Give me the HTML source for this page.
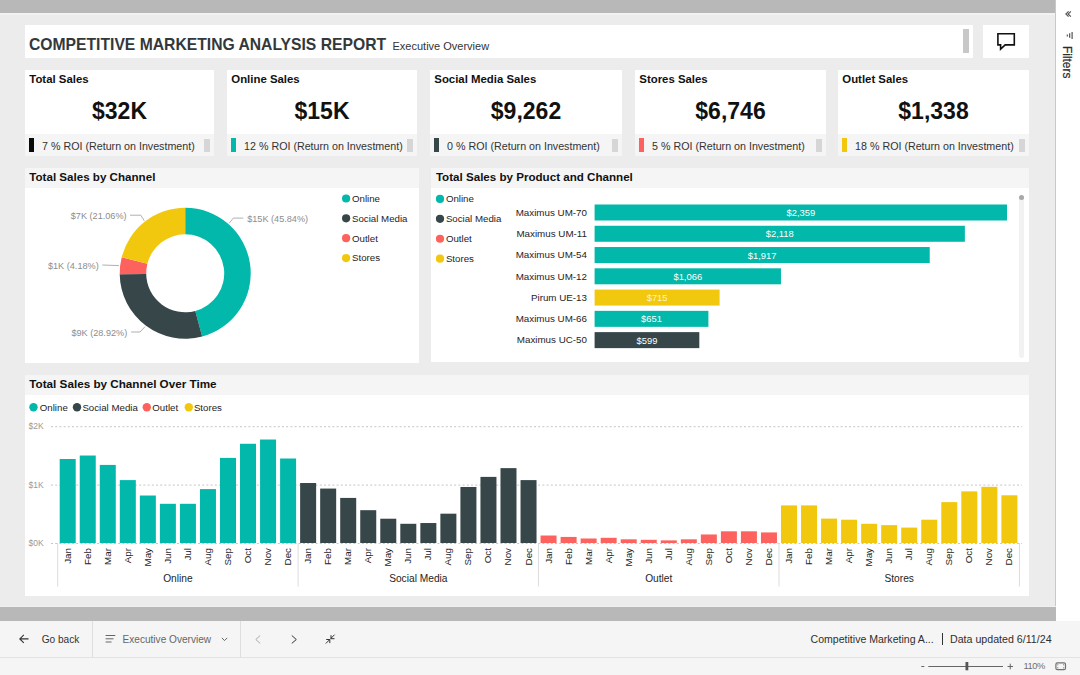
<!DOCTYPE html>
<html><head><meta charset="utf-8">
<style>
*{margin:0;padding:0;box-sizing:border-box}
html,body{width:1080px;height:675px;overflow:hidden;background:#ececec;font-family:"Liberation Sans",sans-serif;color:#252423;position:relative}
.a{position:absolute}
.t{position:absolute;white-space:nowrap;line-height:1;z-index:2}
svg{position:absolute;left:0;top:0;z-index:1}
</style></head><body>
<div class="a" style="left:0px;top:0px;width:1056px;height:13px;background:#b8b8b8;"></div>
<div class="a" style="left:0px;top:13px;width:1056px;height:2px;background:#f2f2f2;"></div>
<div class="a" style="left:1055px;top:0px;width:25px;height:621px;background:#fff;border-left:1px solid #c8c8c8;"></div>
<div class="a" style="left:25px;top:25px;width:948px;height:33px;background:#fff;"></div>
<div class="t" style="left:29.00px;top:36.71px;font-size:15.7px;color:#33383b;font-weight:700;">COMPETITIVE MARKETING ANALYSIS REPORT</div>
<div class="t" style="left:392.50px;top:40.69px;font-size:11px;color:#333;">Executive Overview</div>
<div class="a" style="left:963px;top:29px;width:6px;height:24px;background:#c8c8c8;"></div>
<div class="a" style="left:983px;top:25px;width:46px;height:33px;background:#fff;"></div>
<div class="a" style="left:25px;top:70px;width:189px;height:64px;background:#fff;"></div>
<div class="a" style="left:25px;top:134px;width:189px;height:22px;background:#f5f5f5;"></div>
<div class="t" style="left:29.30px;top:73.85px;font-size:11.4px;color:#111;font-weight:700;">Total Sales</div>
<div class="t" style="left:119.50px;transform:translateX(-50%);top:99.53px;font-size:23px;color:#111;font-weight:700;">$32K</div>
<div class="a" style="left:28.9px;top:138px;width:5.3px;height:14.2px;background:#0a0a0a;"></div>
<div class="t" style="left:42.10px;top:140.94px;font-size:10.7px;color:#333;">7 % ROI (Return on Investment)</div>
<div class="a" style="left:203.7px;top:138.5px;width:6.2px;height:13.6px;background:#d6d6d6;"></div>
<div class="a" style="left:227px;top:70px;width:190px;height:64px;background:#fff;"></div>
<div class="a" style="left:227px;top:134px;width:190px;height:22px;background:#f5f5f5;"></div>
<div class="t" style="left:231.30px;top:73.85px;font-size:11.4px;color:#111;font-weight:700;">Online Sales</div>
<div class="t" style="left:322.00px;transform:translateX(-50%);top:99.53px;font-size:23px;color:#111;font-weight:700;">$15K</div>
<div class="a" style="left:230.9px;top:138px;width:5.3px;height:14.2px;background:#01b8aa;"></div>
<div class="t" style="left:244.10px;top:140.94px;font-size:10.7px;color:#333;">12 % ROI (Return on Investment)</div>
<div class="a" style="left:406.7px;top:138.5px;width:6.2px;height:13.6px;background:#d6d6d6;"></div>
<div class="a" style="left:430px;top:70px;width:192px;height:64px;background:#fff;"></div>
<div class="a" style="left:430px;top:134px;width:192px;height:22px;background:#f5f5f5;"></div>
<div class="t" style="left:434.30px;top:73.85px;font-size:11.4px;color:#111;font-weight:700;">Social Media Sales</div>
<div class="t" style="left:526.00px;transform:translateX(-50%);top:99.53px;font-size:23px;color:#111;font-weight:700;">$9,262</div>
<div class="a" style="left:433.9px;top:138px;width:5.3px;height:14.2px;background:#374649;"></div>
<div class="t" style="left:447.10px;top:140.94px;font-size:10.7px;color:#333;">0 % ROI (Return on Investment)</div>
<div class="a" style="left:611.7px;top:138.5px;width:6.2px;height:13.6px;background:#d6d6d6;"></div>
<div class="a" style="left:635px;top:70px;width:191px;height:64px;background:#fff;"></div>
<div class="a" style="left:635px;top:134px;width:191px;height:22px;background:#f5f5f5;"></div>
<div class="t" style="left:639.30px;top:73.85px;font-size:11.4px;color:#111;font-weight:700;">Stores Sales</div>
<div class="t" style="left:730.50px;transform:translateX(-50%);top:99.53px;font-size:23px;color:#111;font-weight:700;">$6,746</div>
<div class="a" style="left:638.9px;top:138px;width:5.3px;height:14.2px;background:#fd625e;"></div>
<div class="t" style="left:652.10px;top:140.94px;font-size:10.7px;color:#333;">5 % ROI (Return on Investment)</div>
<div class="a" style="left:815.7px;top:138.5px;width:6.2px;height:13.6px;background:#d6d6d6;"></div>
<div class="a" style="left:838px;top:70px;width:191px;height:64px;background:#fff;"></div>
<div class="a" style="left:838px;top:134px;width:191px;height:22px;background:#f5f5f5;"></div>
<div class="t" style="left:842.30px;top:73.85px;font-size:11.4px;color:#111;font-weight:700;">Outlet Sales</div>
<div class="t" style="left:933.50px;transform:translateX(-50%);top:99.53px;font-size:23px;color:#111;font-weight:700;">$1,338</div>
<div class="a" style="left:841.9px;top:138px;width:5.3px;height:14.2px;background:#f2c80f;"></div>
<div class="t" style="left:855.10px;top:140.94px;font-size:10.7px;color:#333;">18 % ROI (Return on Investment)</div>
<div class="a" style="left:1018.7px;top:138.5px;width:6.2px;height:13.6px;background:#d6d6d6;"></div>
<div class="a" style="left:25px;top:168px;width:394px;height:195px;background:#fff;"></div>
<div class="a" style="left:25px;top:168px;width:394px;height:20px;background:#f5f5f5;"></div>
<div class="t" style="left:29.30px;top:170.68px;font-size:11.6px;color:#111;font-weight:700;">Total Sales by Channel</div>
<div class="t" style="left:247.20px;top:215.05px;font-size:9.15px;color:#8c8c8c;">$15K (45.84%)</div>
<div class="t" style="right:953.40px;top:212.45px;font-size:9.15px;color:#8c8c8c;">$7K (21.06%)</div>
<div class="t" style="right:981.30px;top:261.65px;font-size:9.15px;color:#8c8c8c;">$1K (4.18%)</div>
<div class="t" style="right:952.80px;top:328.95px;font-size:9.15px;color:#8c8c8c;">$9K (28.92%)</div>
<div class="t" style="left:352.00px;top:193.89px;font-size:9.7px;color:#252423;">Online</div>
<div class="t" style="left:352.00px;top:213.74px;font-size:9.7px;color:#252423;">Social Media</div>
<div class="t" style="left:352.00px;top:233.59px;font-size:9.7px;color:#252423;">Outlet</div>
<div class="t" style="left:352.00px;top:253.44px;font-size:9.7px;color:#252423;">Stores</div>
<div class="a" style="left:431px;top:168px;width:598px;height:194px;background:#fff;"></div>
<div class="a" style="left:431px;top:168px;width:598px;height:20px;background:#f5f5f5;"></div>
<div class="t" style="left:435.90px;top:171.48px;font-size:11.6px;color:#111;font-weight:700;">Total Sales by Product and Channel</div>
<div class="t" style="left:445.90px;top:194.29px;font-size:9.7px;color:#252423;">Online</div>
<div class="t" style="left:445.90px;top:214.22px;font-size:9.7px;color:#252423;">Social Media</div>
<div class="t" style="left:445.90px;top:234.15px;font-size:9.7px;color:#252423;">Outlet</div>
<div class="t" style="left:445.90px;top:254.08px;font-size:9.7px;color:#252423;">Stores</div>
<div class="t" style="right:493.00px;top:207.80px;font-size:9.8px;color:#252423;">Maximus UM-70</div>
<div class="t" style="left:800.80px;transform:translateX(-50%);top:208.14px;font-size:9.4px;color:#fff;">$2,359</div>
<div class="t" style="right:493.00px;top:229.07px;font-size:9.8px;color:#252423;">Maximus UM-11</div>
<div class="t" style="left:779.73px;transform:translateX(-50%);top:229.41px;font-size:9.4px;color:#fff;">$2,118</div>
<div class="t" style="right:493.00px;top:250.34px;font-size:9.8px;color:#252423;">Maximus UM-54</div>
<div class="t" style="left:762.16px;transform:translateX(-50%);top:250.68px;font-size:9.4px;color:#fff;">$1,917</div>
<div class="t" style="right:493.00px;top:271.61px;font-size:9.8px;color:#252423;">Maximus UM-12</div>
<div class="t" style="left:687.78px;transform:translateX(-50%);top:271.95px;font-size:9.4px;color:#fff;">$1,066</div>
<div class="t" style="right:493.00px;top:292.88px;font-size:9.8px;color:#252423;">Pirum UE-13</div>
<div class="t" style="left:657.10px;transform:translateX(-50%);top:293.22px;font-size:9.4px;color:#fdf3c8;">$715</div>
<div class="t" style="right:493.00px;top:314.15px;font-size:9.8px;color:#252423;">Maximus UM-66</div>
<div class="t" style="left:651.50px;transform:translateX(-50%);top:314.49px;font-size:9.4px;color:#fff;">$651</div>
<div class="t" style="right:493.00px;top:335.42px;font-size:9.8px;color:#252423;">Maximus UC-50</div>
<div class="t" style="left:646.96px;transform:translateX(-50%);top:335.76px;font-size:9.4px;color:#fff;">$599</div>
<div class="a" style="left:1019px;top:195px;width:5px;height:163px;background:#f2f2f2;border-radius:3px;"></div>
<div class="a" style="left:1019px;top:195px;width:5px;height:5px;background:#a8a8a8;border-radius:3px;"></div>
<div class="a" style="left:25px;top:375px;width:1004px;height:221px;background:#fff;"></div>
<div class="a" style="left:25px;top:375px;width:1004px;height:19.5px;background:#f5f5f5;"></div>
<div class="t" style="left:29.30px;top:378.00px;font-size:11.7px;color:#111;font-weight:700;">Total Sales by Channel Over Time</div>
<div class="t" style="left:39.80px;top:402.69px;font-size:9.7px;color:#252423;">Online</div>
<div class="t" style="left:82.40px;top:402.69px;font-size:9.7px;color:#252423;">Social Media</div>
<div class="t" style="left:152.30px;top:402.69px;font-size:9.7px;color:#252423;">Outlet</div>
<div class="t" style="left:193.90px;top:402.69px;font-size:9.7px;color:#252423;">Stores</div>
<div class="t" style="right:1036.40px;top:422.20px;font-size:8.5px;color:#999;">$2K</div>
<div class="t" style="right:1036.40px;top:480.60px;font-size:8.5px;color:#999;">$1K</div>
<div class="t" style="right:1036.40px;top:539.00px;font-size:8.5px;color:#999;">$0K</div>
<div class="t" style="left:67.70px;top:547.5px;font-size:9.8px;color:#252423;transform-origin:0 0;transform:rotate(-90deg) translate(-100%,-50%)">Jan</div>
<div class="t" style="left:87.74px;top:547.5px;font-size:9.8px;color:#252423;transform-origin:0 0;transform:rotate(-90deg) translate(-100%,-50%)">Feb</div>
<div class="t" style="left:107.77px;top:547.5px;font-size:9.8px;color:#252423;transform-origin:0 0;transform:rotate(-90deg) translate(-100%,-50%)">Mar</div>
<div class="t" style="left:127.81px;top:547.5px;font-size:9.8px;color:#252423;transform-origin:0 0;transform:rotate(-90deg) translate(-100%,-50%)">Apr</div>
<div class="t" style="left:147.84px;top:547.5px;font-size:9.8px;color:#252423;transform-origin:0 0;transform:rotate(-90deg) translate(-100%,-50%)">May</div>
<div class="t" style="left:167.88px;top:547.5px;font-size:9.8px;color:#252423;transform-origin:0 0;transform:rotate(-90deg) translate(-100%,-50%)">Jun</div>
<div class="t" style="left:187.92px;top:547.5px;font-size:9.8px;color:#252423;transform-origin:0 0;transform:rotate(-90deg) translate(-100%,-50%)">Jul</div>
<div class="t" style="left:207.95px;top:547.5px;font-size:9.8px;color:#252423;transform-origin:0 0;transform:rotate(-90deg) translate(-100%,-50%)">Aug</div>
<div class="t" style="left:227.99px;top:547.5px;font-size:9.8px;color:#252423;transform-origin:0 0;transform:rotate(-90deg) translate(-100%,-50%)">Sep</div>
<div class="t" style="left:248.02px;top:547.5px;font-size:9.8px;color:#252423;transform-origin:0 0;transform:rotate(-90deg) translate(-100%,-50%)">Oct</div>
<div class="t" style="left:268.06px;top:547.5px;font-size:9.8px;color:#252423;transform-origin:0 0;transform:rotate(-90deg) translate(-100%,-50%)">Nov</div>
<div class="t" style="left:288.10px;top:547.5px;font-size:9.8px;color:#252423;transform-origin:0 0;transform:rotate(-90deg) translate(-100%,-50%)">Dec</div>
<div class="t" style="left:177.90px;transform:translateX(-50%);top:573.77px;font-size:10.2px;color:#252423;">Online</div>
<div class="t" style="left:308.13px;top:547.5px;font-size:9.8px;color:#252423;transform-origin:0 0;transform:rotate(-90deg) translate(-100%,-50%)">Jan</div>
<div class="t" style="left:328.17px;top:547.5px;font-size:9.8px;color:#252423;transform-origin:0 0;transform:rotate(-90deg) translate(-100%,-50%)">Feb</div>
<div class="t" style="left:348.20px;top:547.5px;font-size:9.8px;color:#252423;transform-origin:0 0;transform:rotate(-90deg) translate(-100%,-50%)">Mar</div>
<div class="t" style="left:368.24px;top:547.5px;font-size:9.8px;color:#252423;transform-origin:0 0;transform:rotate(-90deg) translate(-100%,-50%)">Apr</div>
<div class="t" style="left:388.28px;top:547.5px;font-size:9.8px;color:#252423;transform-origin:0 0;transform:rotate(-90deg) translate(-100%,-50%)">May</div>
<div class="t" style="left:408.31px;top:547.5px;font-size:9.8px;color:#252423;transform-origin:0 0;transform:rotate(-90deg) translate(-100%,-50%)">Jun</div>
<div class="t" style="left:428.35px;top:547.5px;font-size:9.8px;color:#252423;transform-origin:0 0;transform:rotate(-90deg) translate(-100%,-50%)">Jul</div>
<div class="t" style="left:448.38px;top:547.5px;font-size:9.8px;color:#252423;transform-origin:0 0;transform:rotate(-90deg) translate(-100%,-50%)">Aug</div>
<div class="t" style="left:468.42px;top:547.5px;font-size:9.8px;color:#252423;transform-origin:0 0;transform:rotate(-90deg) translate(-100%,-50%)">Sep</div>
<div class="t" style="left:488.46px;top:547.5px;font-size:9.8px;color:#252423;transform-origin:0 0;transform:rotate(-90deg) translate(-100%,-50%)">Oct</div>
<div class="t" style="left:508.49px;top:547.5px;font-size:9.8px;color:#252423;transform-origin:0 0;transform:rotate(-90deg) translate(-100%,-50%)">Nov</div>
<div class="t" style="left:528.53px;top:547.5px;font-size:9.8px;color:#252423;transform-origin:0 0;transform:rotate(-90deg) translate(-100%,-50%)">Dec</div>
<div class="t" style="left:418.33px;transform:translateX(-50%);top:573.77px;font-size:10.2px;color:#252423;">Social Media</div>
<div class="t" style="left:548.56px;top:547.5px;font-size:9.8px;color:#252423;transform-origin:0 0;transform:rotate(-90deg) translate(-100%,-50%)">Jan</div>
<div class="t" style="left:568.60px;top:547.5px;font-size:9.8px;color:#252423;transform-origin:0 0;transform:rotate(-90deg) translate(-100%,-50%)">Feb</div>
<div class="t" style="left:588.64px;top:547.5px;font-size:9.8px;color:#252423;transform-origin:0 0;transform:rotate(-90deg) translate(-100%,-50%)">Mar</div>
<div class="t" style="left:608.67px;top:547.5px;font-size:9.8px;color:#252423;transform-origin:0 0;transform:rotate(-90deg) translate(-100%,-50%)">Apr</div>
<div class="t" style="left:628.71px;top:547.5px;font-size:9.8px;color:#252423;transform-origin:0 0;transform:rotate(-90deg) translate(-100%,-50%)">May</div>
<div class="t" style="left:648.74px;top:547.5px;font-size:9.8px;color:#252423;transform-origin:0 0;transform:rotate(-90deg) translate(-100%,-50%)">Jun</div>
<div class="t" style="left:668.78px;top:547.5px;font-size:9.8px;color:#252423;transform-origin:0 0;transform:rotate(-90deg) translate(-100%,-50%)">Jul</div>
<div class="t" style="left:688.82px;top:547.5px;font-size:9.8px;color:#252423;transform-origin:0 0;transform:rotate(-90deg) translate(-100%,-50%)">Aug</div>
<div class="t" style="left:708.85px;top:547.5px;font-size:9.8px;color:#252423;transform-origin:0 0;transform:rotate(-90deg) translate(-100%,-50%)">Sep</div>
<div class="t" style="left:728.89px;top:547.5px;font-size:9.8px;color:#252423;transform-origin:0 0;transform:rotate(-90deg) translate(-100%,-50%)">Oct</div>
<div class="t" style="left:748.92px;top:547.5px;font-size:9.8px;color:#252423;transform-origin:0 0;transform:rotate(-90deg) translate(-100%,-50%)">Nov</div>
<div class="t" style="left:768.96px;top:547.5px;font-size:9.8px;color:#252423;transform-origin:0 0;transform:rotate(-90deg) translate(-100%,-50%)">Dec</div>
<div class="t" style="left:658.76px;transform:translateX(-50%);top:573.77px;font-size:10.2px;color:#252423;">Outlet</div>
<div class="t" style="left:789.00px;top:547.5px;font-size:9.8px;color:#252423;transform-origin:0 0;transform:rotate(-90deg) translate(-100%,-50%)">Jan</div>
<div class="t" style="left:809.03px;top:547.5px;font-size:9.8px;color:#252423;transform-origin:0 0;transform:rotate(-90deg) translate(-100%,-50%)">Feb</div>
<div class="t" style="left:829.07px;top:547.5px;font-size:9.8px;color:#252423;transform-origin:0 0;transform:rotate(-90deg) translate(-100%,-50%)">Mar</div>
<div class="t" style="left:849.10px;top:547.5px;font-size:9.8px;color:#252423;transform-origin:0 0;transform:rotate(-90deg) translate(-100%,-50%)">Apr</div>
<div class="t" style="left:869.14px;top:547.5px;font-size:9.8px;color:#252423;transform-origin:0 0;transform:rotate(-90deg) translate(-100%,-50%)">May</div>
<div class="t" style="left:889.18px;top:547.5px;font-size:9.8px;color:#252423;transform-origin:0 0;transform:rotate(-90deg) translate(-100%,-50%)">Jun</div>
<div class="t" style="left:909.21px;top:547.5px;font-size:9.8px;color:#252423;transform-origin:0 0;transform:rotate(-90deg) translate(-100%,-50%)">Jul</div>
<div class="t" style="left:929.25px;top:547.5px;font-size:9.8px;color:#252423;transform-origin:0 0;transform:rotate(-90deg) translate(-100%,-50%)">Aug</div>
<div class="t" style="left:949.28px;top:547.5px;font-size:9.8px;color:#252423;transform-origin:0 0;transform:rotate(-90deg) translate(-100%,-50%)">Sep</div>
<div class="t" style="left:969.32px;top:547.5px;font-size:9.8px;color:#252423;transform-origin:0 0;transform:rotate(-90deg) translate(-100%,-50%)">Oct</div>
<div class="t" style="left:989.36px;top:547.5px;font-size:9.8px;color:#252423;transform-origin:0 0;transform:rotate(-90deg) translate(-100%,-50%)">Nov</div>
<div class="t" style="left:1009.39px;top:547.5px;font-size:9.8px;color:#252423;transform-origin:0 0;transform:rotate(-90deg) translate(-100%,-50%)">Dec</div>
<div class="t" style="left:899.20px;transform:translateX(-50%);top:573.77px;font-size:10.2px;color:#252423;">Stores</div>
<div class="a" style="left:0px;top:606px;width:1056px;height:1.5px;background:#f0f0f0;"></div>
<div class="a" style="left:0px;top:607.3px;width:1056px;height:13.5px;background:#b8b8b8;"></div>
<div class="a" style="left:0px;top:620.7px;width:1080px;height:36.3px;background:#f5f5f5;"></div>
<div class="a" style="left:0px;top:657px;width:1080px;height:1px;background:#e3e3e3;"></div>
<div class="a" style="left:0px;top:658px;width:1080px;height:17px;background:#f5f5f5;"></div>
<div class="a" style="left:91.5px;top:621px;width:1px;height:36px;background:#dedede;"></div>
<div class="a" style="left:239.5px;top:621px;width:1px;height:36px;background:#dedede;"></div>
<div class="t" style="left:41.70px;top:634.85px;font-size:10.1px;color:#333;">Go back</div>
<div class="t" style="left:122.50px;top:635.35px;font-size:10.1px;color:#666;">Executive Overview</div>
<div class="t" style="left:810.60px;top:634.17px;font-size:10.55px;color:#2f2f2f;">Competitive Marketing A...</div>
<div class="a" style="left:942px;top:633.3px;width:1px;height:11.4px;background:#333;"></div>
<div class="t" style="left:950.00px;top:634.18px;font-size:10.65px;color:#2f2f2f;">Data updated 6/11/24</div>
<div class="t" style="left:1023.60px;top:661.53px;font-size:9.3px;color:#707070;letter-spacing:-0.45px;">110%</div>
<div class="t" style="left:1060.2px;top:46.4px;font-size:11.9px;color:#2a2a2a;-webkit-text-stroke:0.2px #2a2a2a;transform-origin:0 0;transform:rotate(90deg) translate(0,-100%)">Filters</div>
<svg width="1080" height="675" viewBox="0 0 1080 675"><path d="M185.20 207.80A65.5 65.5 0 0 1 202.13 336.58L195.28 310.98A39 39 0 0 0 185.20 234.30Z" fill="#01b8aa"/><path d="M202.13 336.58A65.5 65.5 0 0 1 119.71 274.29L146.20 273.89A39 39 0 0 0 195.28 310.98Z" fill="#374649"/><path d="M119.71 274.29A65.5 65.5 0 0 1 121.70 257.25L147.39 263.74A39 39 0 0 0 146.20 273.89Z" fill="#fd625e"/><path d="M121.70 257.25A65.5 65.5 0 0 1 185.20 207.80L185.20 234.30A39 39 0 0 0 147.39 263.74Z" fill="#f2c80f"/><polyline points="243.3,218.1 233.3,218.1 229.1,223.3" fill="none" stroke="#b0b0b0" stroke-width="1"/><polyline points="130,215.2 140.8,215.2 144.3,220.8" fill="none" stroke="#b0b0b0" stroke-width="1"/><polyline points="102.3,265 118.9,265.6" fill="none" stroke="#b0b0b0" stroke-width="1"/><polyline points="131.1,332 140,332 145,326.7" fill="none" stroke="#b0b0b0" stroke-width="1"/><circle cx="346.1" cy="198.50" r="4.1" fill="#01b8aa"/><circle cx="346.1" cy="218.35" r="4.1" fill="#374649"/><circle cx="346.1" cy="238.20" r="4.1" fill="#fd625e"/><circle cx="346.1" cy="258.05" r="4.1" fill="#f2c80f"/><circle cx="440" cy="198.90" r="4.1" fill="#01b8aa"/><circle cx="440" cy="218.83" r="4.1" fill="#374649"/><circle cx="440" cy="238.76" r="4.1" fill="#fd625e"/><circle cx="440" cy="258.69" r="4.1" fill="#f2c80f"/><rect x="594.6" y="204.50" width="412.40" height="16" fill="#01b8aa"/><rect x="594.6" y="225.77" width="370.27" height="16" fill="#01b8aa"/><rect x="594.6" y="247.04" width="335.13" height="16" fill="#01b8aa"/><rect x="594.6" y="268.31" width="186.36" height="16" fill="#01b8aa"/><rect x="594.6" y="289.58" width="125.00" height="16" fill="#f2c80f"/><rect x="594.6" y="310.85" width="113.81" height="16" fill="#01b8aa"/><rect x="594.6" y="332.12" width="104.72" height="16" fill="#374649"/><circle cx="33.5" cy="407.3" r="4.2" fill="#01b8aa"/><circle cx="77" cy="407.3" r="4.2" fill="#374649"/><circle cx="146.8" cy="407.3" r="4.2" fill="#fd625e"/><circle cx="188.8" cy="407.3" r="4.2" fill="#f2c80f"/><line x1="51" y1="426.70" x2="1022" y2="426.70" stroke="#c6c6c6" stroke-width="1" stroke-dasharray="2 2.2"/><line x1="51" y1="485.10" x2="1022" y2="485.10" stroke="#c6c6c6" stroke-width="1" stroke-dasharray="2 2.2"/><line x1="51" y1="543.50" x2="1022" y2="543.50" stroke="#c6c6c6" stroke-width="1" stroke-dasharray="2 2.2"/><rect x="59.70" y="459.02" width="16" height="83.98" fill="#01b8aa"/><rect x="79.74" y="455.52" width="16" height="87.48" fill="#01b8aa"/><rect x="99.77" y="464.92" width="16" height="78.08" fill="#01b8aa"/><rect x="119.81" y="480.10" width="16" height="62.90" fill="#01b8aa"/><rect x="139.84" y="495.52" width="16" height="47.48" fill="#01b8aa"/><rect x="159.88" y="503.81" width="16" height="39.19" fill="#01b8aa"/><rect x="179.92" y="503.81" width="16" height="39.19" fill="#01b8aa"/><rect x="199.95" y="489.10" width="16" height="53.90" fill="#01b8aa"/><rect x="219.99" y="457.91" width="16" height="85.09" fill="#01b8aa"/><rect x="240.02" y="443.78" width="16" height="99.22" fill="#01b8aa"/><rect x="260.06" y="439.52" width="16" height="103.48" fill="#01b8aa"/><rect x="280.10" y="458.50" width="16" height="84.50" fill="#01b8aa"/><line x1="57.70" y1="543" x2="57.70" y2="586.5" stroke="#dcdcdc" stroke-width="1"/><rect x="300.13" y="483.02" width="16" height="59.98" fill="#374649"/><rect x="320.17" y="488.57" width="16" height="54.43" fill="#374649"/><rect x="340.20" y="497.92" width="16" height="45.08" fill="#374649"/><rect x="360.24" y="510.18" width="16" height="32.82" fill="#374649"/><rect x="380.28" y="518.71" width="16" height="24.29" fill="#374649"/><rect x="400.31" y="523.79" width="16" height="19.21" fill="#374649"/><rect x="420.35" y="523.03" width="16" height="19.97" fill="#374649"/><rect x="440.38" y="513.68" width="16" height="29.32" fill="#374649"/><rect x="460.42" y="486.99" width="16" height="56.01" fill="#374649"/><rect x="480.46" y="476.89" width="16" height="66.11" fill="#374649"/><rect x="500.49" y="468.13" width="16" height="74.87" fill="#374649"/><rect x="520.53" y="480.10" width="16" height="62.90" fill="#374649"/><line x1="298.13" y1="543" x2="298.13" y2="586.5" stroke="#dcdcdc" stroke-width="1"/><rect x="540.56" y="535.52" width="16" height="7.48" fill="#fd625e"/><rect x="560.60" y="536.93" width="16" height="6.07" fill="#fd625e"/><rect x="580.64" y="538.50" width="16" height="4.50" fill="#fd625e"/><rect x="600.67" y="537.80" width="16" height="5.20" fill="#fd625e"/><rect x="620.71" y="539.32" width="16" height="3.68" fill="#fd625e"/><rect x="640.74" y="539.79" width="16" height="3.21" fill="#fd625e"/><rect x="660.78" y="540.37" width="16" height="2.63" fill="#fd625e"/><rect x="680.82" y="539.32" width="16" height="3.68" fill="#fd625e"/><rect x="700.85" y="534.47" width="16" height="8.53" fill="#fd625e"/><rect x="720.89" y="531.32" width="16" height="11.68" fill="#fd625e"/><rect x="740.92" y="531.32" width="16" height="11.68" fill="#fd625e"/><rect x="760.96" y="532.43" width="16" height="10.57" fill="#fd625e"/><line x1="538.56" y1="543" x2="538.56" y2="586.5" stroke="#dcdcdc" stroke-width="1"/><rect x="781.00" y="505.39" width="16" height="37.61" fill="#f2c80f"/><rect x="801.03" y="505.39" width="16" height="37.61" fill="#f2c80f"/><rect x="821.07" y="518.59" width="16" height="24.41" fill="#f2c80f"/><rect x="841.10" y="519.70" width="16" height="23.30" fill="#f2c80f"/><rect x="861.14" y="523.79" width="16" height="19.21" fill="#f2c80f"/><rect x="881.18" y="525.13" width="16" height="17.87" fill="#f2c80f"/><rect x="901.21" y="527.58" width="16" height="15.42" fill="#f2c80f"/><rect x="921.25" y="519.70" width="16" height="23.30" fill="#f2c80f"/><rect x="941.28" y="502.12" width="16" height="40.88" fill="#f2c80f"/><rect x="961.32" y="491.37" width="16" height="51.63" fill="#f2c80f"/><rect x="981.36" y="486.82" width="16" height="56.18" fill="#f2c80f"/><rect x="1001.39" y="495.29" width="16" height="47.71" fill="#f2c80f"/><line x1="779.00" y1="543" x2="779.00" y2="586.5" stroke="#dcdcdc" stroke-width="1"/><line x1="1019.43" y1="543" x2="1019.43" y2="586.5" stroke="#dcdcdc" stroke-width="1"/><path d="M997.9 33.8H1014.3V44.9H1005.2L1000.6 49.1V44.9H997.9Z" fill="none" stroke="#111" stroke-width="1.6" stroke-linejoin="miter"/><path d="M1068.6 11.3L1065.8 14L1068.6 16.7M1070.9 11.3L1068.1 14L1070.9 16.7" fill="none" stroke="#555" stroke-width="1.1"/><path d="M1067.3 34.5V36.5M1069.7 33.3V37.7M1072.1 32V39" fill="none" stroke="#444" stroke-width="1.1"/><path d="M28.5 638.9H19.8M23.8 634.9L19.8 638.9L23.8 642.9" fill="none" stroke="#333" stroke-width="1.1"/><path d="M105.6 635.5H115.3M105.6 638.8H113.5M105.6 642H111.5" fill="none" stroke="#666" stroke-width="1"/><path d="M221.9 637.9L224.5 640.6L227.2 637.9" fill="none" stroke="#666" stroke-width="1"/><path d="M260.2 635.5L255.8 639.5L260.2 643.4" fill="none" stroke="#aaa" stroke-width="1"/><path d="M291.8 635.5L296.3 639.5L291.8 643.4" fill="none" stroke="#333" stroke-width="1"/><path d="M325.8 643.5L329.8 639.5M326.2 639.5H329.8V643.1M334.6 634.7L330.6 638.7M331 635.2V638.7H334.5" fill="none" stroke="#333" stroke-width="1"/><path d="M921.3 666.5H924.3M928.3 666.5H1003M1007.5 666.5H1013M1010.25 663.7V669.3" fill="none" stroke="#666" stroke-width="1"/><rect x="965.5" y="662" width="2.8" height="8.3" fill="#555"/><rect x="1055.9" y="662.9" width="9.6" height="6.8" rx="1.5" fill="none" stroke="#707070" stroke-width="1.2"/><path d="M1057.6 665.3V664.6H1058.3M1063.8 664.6V665.3M1063.1 664.6H1063.8M1057.6 667.3V668H1058.3M1063.1 668H1063.8V667.3" fill="none" stroke="#707070" stroke-width="0.8"/></svg>
</body></html>
